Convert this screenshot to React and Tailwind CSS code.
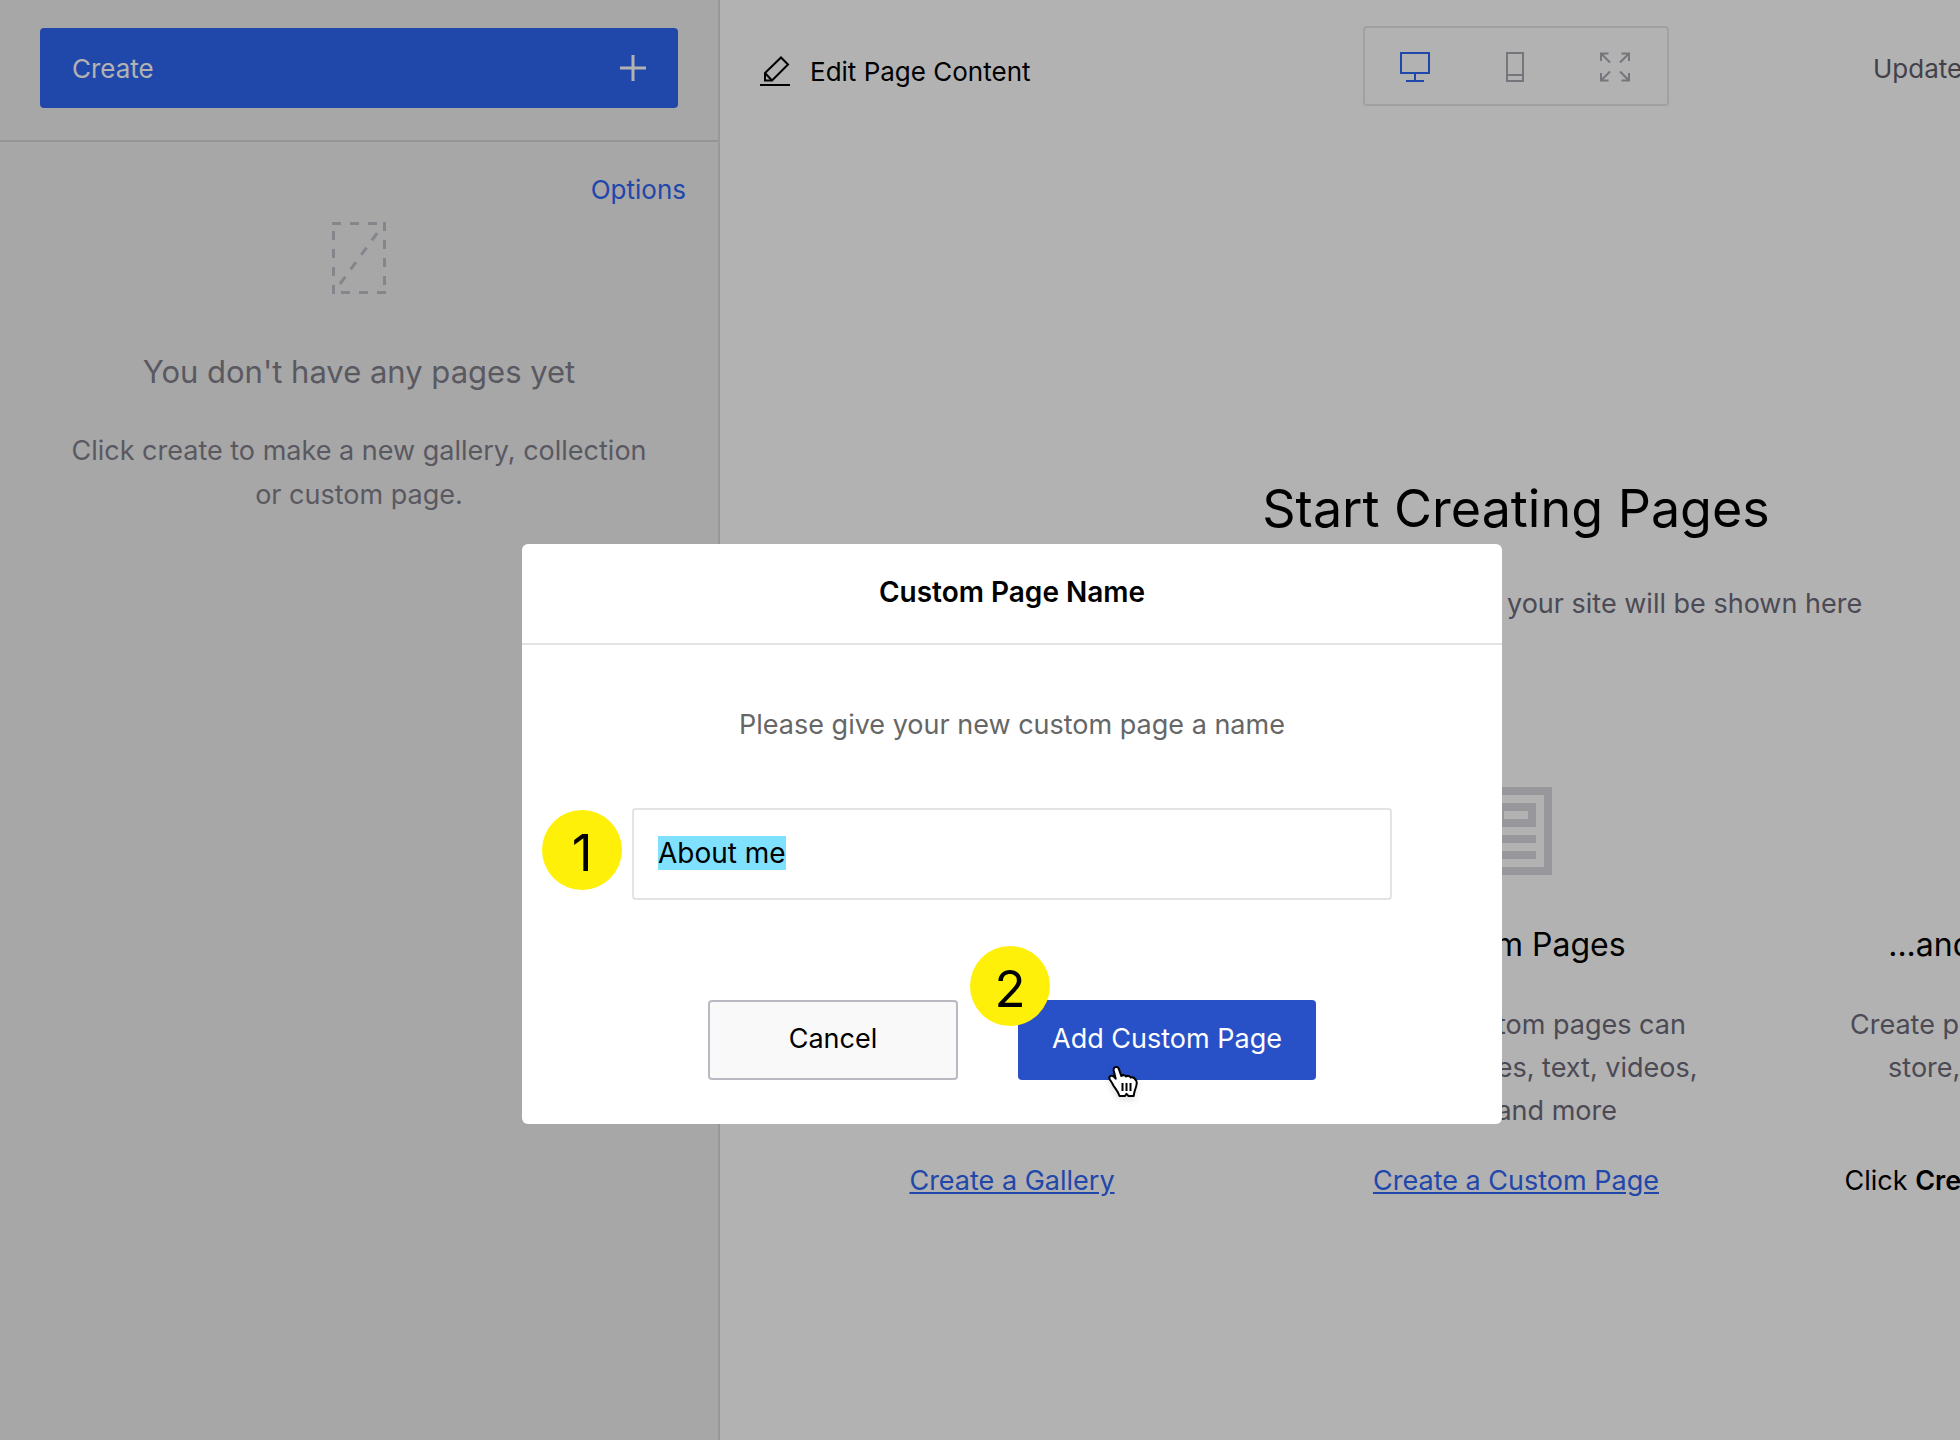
import React, { useEffect, useRef, useState } from "react";

function PlusIcon() {
  return (
    <svg width="26" height="26" viewBox="0 0 26 26" stroke="currentColor" strokeWidth="3" fill="none" aria-hidden="true">
      <path d="M13 0v26M0 13h26" />
    </svg>
  );
}

function EmptyPageIcon() {
  return (
    <svg width="54" height="72" viewBox="0 0 54 72" stroke="currentColor" strokeWidth="3" fill="none" aria-hidden="true">
      <path d="M0 1.5h54" strokeDasharray="9 9" />
      <path d="M52.5 0v72" strokeDasharray="9 9" />
      <path d="M54 70.5H0" strokeDasharray="9 9" />
      <path d="M1.5 72V0" strokeDasharray="9 9" />
      <path d="M8 62L46 10" strokeDasharray="9 9" />
    </svg>
  );
}

function EditIcon() {
  return (
    <svg width="30" height="30" viewBox="0 0 30 30" stroke="currentColor" strokeWidth="2" fill="none" aria-hidden="true">
      <path d="M5 17L21 1.500l7 7L12 24.500H5z" />
      <path d="M5 17l7 7.500" />
      <path d="M0 29h30" />
    </svg>
  );
}

function DesktopIcon() {
  return (
    <svg width="30" height="30" viewBox="0 0 30 30" stroke="currentColor" strokeWidth="2" fill="none" aria-hidden="true">
      <path d="M1 1h28v20H1zM15 21v8M6 29h18" />
    </svg>
  );
}

function PhoneIcon() {
  return (
    <svg width="18" height="30" viewBox="0 0 18 30" stroke="currentColor" strokeWidth="2" fill="none" aria-hidden="true">
      <path d="M1 1h16v28H1zM1 23h16" />
    </svg>
  );
}

function ExpandIcon() {
  return (
    <svg width="30" height="30" viewBox="0 0 30 30" stroke="currentColor" strokeWidth="2" fill="none" aria-hidden="true">
      <path d="M1 9V1.500h7.500M1 1.500l9 9M21.500 1.500H29V9M29 1.500l-9 9M1 21v7.500h7.500M1 28.500l9-9M21.500 28.500H29V21M29 28.500l-9-9" />
    </svg>
  );
}

function PageIcon() {
  return (
    <svg width="72" height="88" viewBox="0 0 72 88" stroke="currentColor" strokeWidth="8" fill="none" aria-hidden="true">
      <path d="M4 4h64v80H4zM20 20h32v16H20zM16 52h40M16 68h40" />
    </svg>
  );
}

function HandCursor() {
  return (
    <svg width="32" height="34" viewBox="0 0 32 34" className="drop-shadow-md" aria-hidden="true">
      <path
        d="M8.2 2.200c1.600-.8 3.200.2 3.700 2L14.300 11c1.600-1.400 4-1 4.800.4 1.500-1 3.800-.5 4.600 1.100 1.600-.7 3.600.1 4.200 1.600 1.600 1 2 2.500 1.800 4.400-.3 3.500-1.500 5.500-2 7.500-.4 1.500-.8 3-1 5h-5.200l-2-2.200-1.500 2.200h-5.500c-1.200-4-3.500-6.500-5.800-10-1.200-2.300-2.500-4.500-3.900-6.500-1.300-2.200.3-4.300 2.500-3.700 1.200.4 2.300 1.600 3.400 2.900L6.700 5.500c-.3-1.600.3-2.800 1.500-3.300z"
        fill="#fff"
        stroke="#000"
        strokeWidth="2"
        strokeLinejoin="round"
      />
      <path d="M15.500 18v8M19.500 18v8M23.500 18v8" stroke="#000" strokeWidth="2" />
    </svg>
  );
}

function StepBadge({ children, className }) {
  return (
    <span
      className={`absolute flex size-20 items-center justify-center rounded-full bg-[#fff00a] pt-1 text-[51px] leading-none text-black ${className}`}
    >
      {children}
    </span>
  );
}

function Sidebar() {
  return (
    <aside className="w-[720px] shrink-0 border-r-2 border-[#d9d9e0] bg-[#f0f0f0]">
      <div className="border-b-2 border-[#d6d6d6] px-10 pt-7 pb-8">
        <button type="button" className="flex h-20 w-full items-center justify-between rounded bg-[#2f66f4] px-8 text-[26px] text-white">
          Create
          <PlusIcon />
        </button>
      </div>
      <div className="flex justify-end px-8 pt-8">
        <button type="button" className="text-[26px] leading-8 text-[#2f66f4]">Options</button>
      </div>
      <div className="flex flex-col items-center px-12 pt-4 text-center text-[#82808c]">
        <span className="text-[#c1bfc8]"><EmptyPageIcon /></span>
        <h2 className="mt-14 text-[31px] leading-11">You don't have any pages yet</h2>
        <p className="mt-[35px] text-[27px] leading-11">
          Click create to make a new gallery, collection
          <br />
          or custom page.
        </p>
      </div>
    </aside>
  );
}

const devices = [
  { name: "Desktop", Icon: DesktopIcon, color: "text-[#2f66f4]" },
  { name: "Mobile", Icon: PhoneIcon, color: "text-[#a9a8b0]" },
  { name: "Full screen", Icon: ExpandIcon, color: "text-[#a9a8b0]" },
];

function Toolbar() {
  return (
    <header className="grid grid-cols-3 items-center px-10 pt-[26px]">
      <button type="button" className="flex items-center gap-5 pt-2.5 text-[26px]">
        <EditIcon />
        Edit Page Content
      </button>
      <div className="flex h-20 w-[306px] items-center justify-self-center rounded border-2 border-[#e6e6e6] pt-0.5">
        {devices.map(({ name, Icon, color }) => (
          <button key={name} type="button" aria-label={name} className={`flex w-[100px] justify-center ${color}`}>
            <Icon />
          </button>
        ))}
      </div>
      <div className="flex justify-end gap-12 pt-1 pr-[46px] text-[26px] text-[#5f5d6b]">
        <span>Updated just now</span>
        <button type="button">Publish</button>
      </div>
    </header>
  );
}

const cards = [
  {
    title: "Galleries",
    lines: ["Show your work in", "beautiful galleries", "and collections"],
    action: <a href="#gallery" className="text-[#2f66f4] underline">Create a Gallery</a>,
  },
  {
    title: "Custom Pages",
    lines: ["Flexible custom pages can", "include images, text, videos,", "forms and more"],
    action: <a href="#custom-page" className="text-[#2f66f4] underline">Create a Custom Page</a>,
  },
  {
    title: "...and much more",
    lines: ["Create pages for your own", "store, blog and more"],
    action: <span>Click <b className="font-semibold">Create</b> to see them all</span>,
  },
];

function Preview() {
  return (
    <main className="min-w-[1592px] flex-1 bg-white">
      <Toolbar />
      <section className="flex flex-col items-center pt-[369px] text-center">
        <h1 className="text-[52px] leading-[68px]">Start Creating Pages</h1>
        <p className="mt-[39px] text-[27px] leading-11 text-[#6d6b79]">New pages you create for your site will be shown here</p>
        <div className="mt-[161px] grid grid-cols-[repeat(3,504px)]">
          {cards.map((card) => (
            <article key={card.title} className="flex flex-col items-center">
              <span className="text-[#dad9df]"><PageIcon /></span>
              <h2 className="mt-12 text-[32px] leading-11">{card.title}</h2>
              <div className="mt-9 h-[130px] text-[27px] leading-[43px] text-[#6d6b79]">
                {card.lines.map((line) => (
                  <p key={line}>{line}</p>
                ))}
              </div>
              <div className="mt-[26px] text-[27px] leading-11">{card.action}</div>
            </article>
          ))}
        </div>
      </section>
    </main>
  );
}

function CustomPageDialog() {
  const [name, setName] = useState("About me");
  const input = useRef(null);

  useEffect(() => {
    input.current.focus();
    input.current.select();
  }, []);

  return (
    <div className="fixed inset-0 flex items-center justify-center bg-black/30 pt-[228px] pl-16">
      <form
        role="dialog"
        aria-labelledby="dialog-title"
        className="w-[980px] rounded-md bg-white pb-11"
        onSubmit={(e) => e.preventDefault()}
      >
        <h2 id="dialog-title" className="border-b-2 border-[#e3e3e3] pt-[26px] pb-[29px] text-center text-[28px] leading-11 font-semibold">
          Custom Page Name
        </h2>
        <label htmlFor="page-name" className="mt-[58px] block text-center text-[27px] leading-11 text-[#666]">
          Please give your new custom page a name
        </label>
        <div className="relative mx-[110px] mt-[61px]">
          <StepBadge className="top-0.5 -left-[90px]">1</StepBadge>
          <input
            ref={input}
            id="page-name"
            value={name}
            onChange={(e) => setName(e.target.value)}
            className="h-[92px] w-full rounded border-2 border-[#e3e3e3] px-6 pb-0.5 text-[28px] leading-8 text-black outline-none selection:bg-[#80e1ff] selection:text-black"
          />
        </div>
        <div className="mt-[100px] flex justify-center gap-[60px] text-[27px]">
          <button type="button" className="h-20 w-[250px] rounded border-2 border-[#b9b9c2] bg-[#f9f9f9] pb-0.5">
            Cancel
          </button>
          <div className="relative">
            <button type="submit" className="h-20 w-[298px] rounded bg-[#2851c8] pb-0.5 text-white">
              Add Custom Page
            </button>
            <StepBadge className="-top-[54px] -left-12">2</StepBadge>
            <span className="absolute top-[65px] left-[89px]"><HandCursor /></span>
          </div>
        </div>
      </form>
    </div>
  );
}

export default function App() {
  return (
    <div className="flex h-screen overflow-hidden font-['Inter',sans-serif] text-black">
      <Sidebar />
      <Preview />
      <CustomPageDialog />
    </div>
  );
}
